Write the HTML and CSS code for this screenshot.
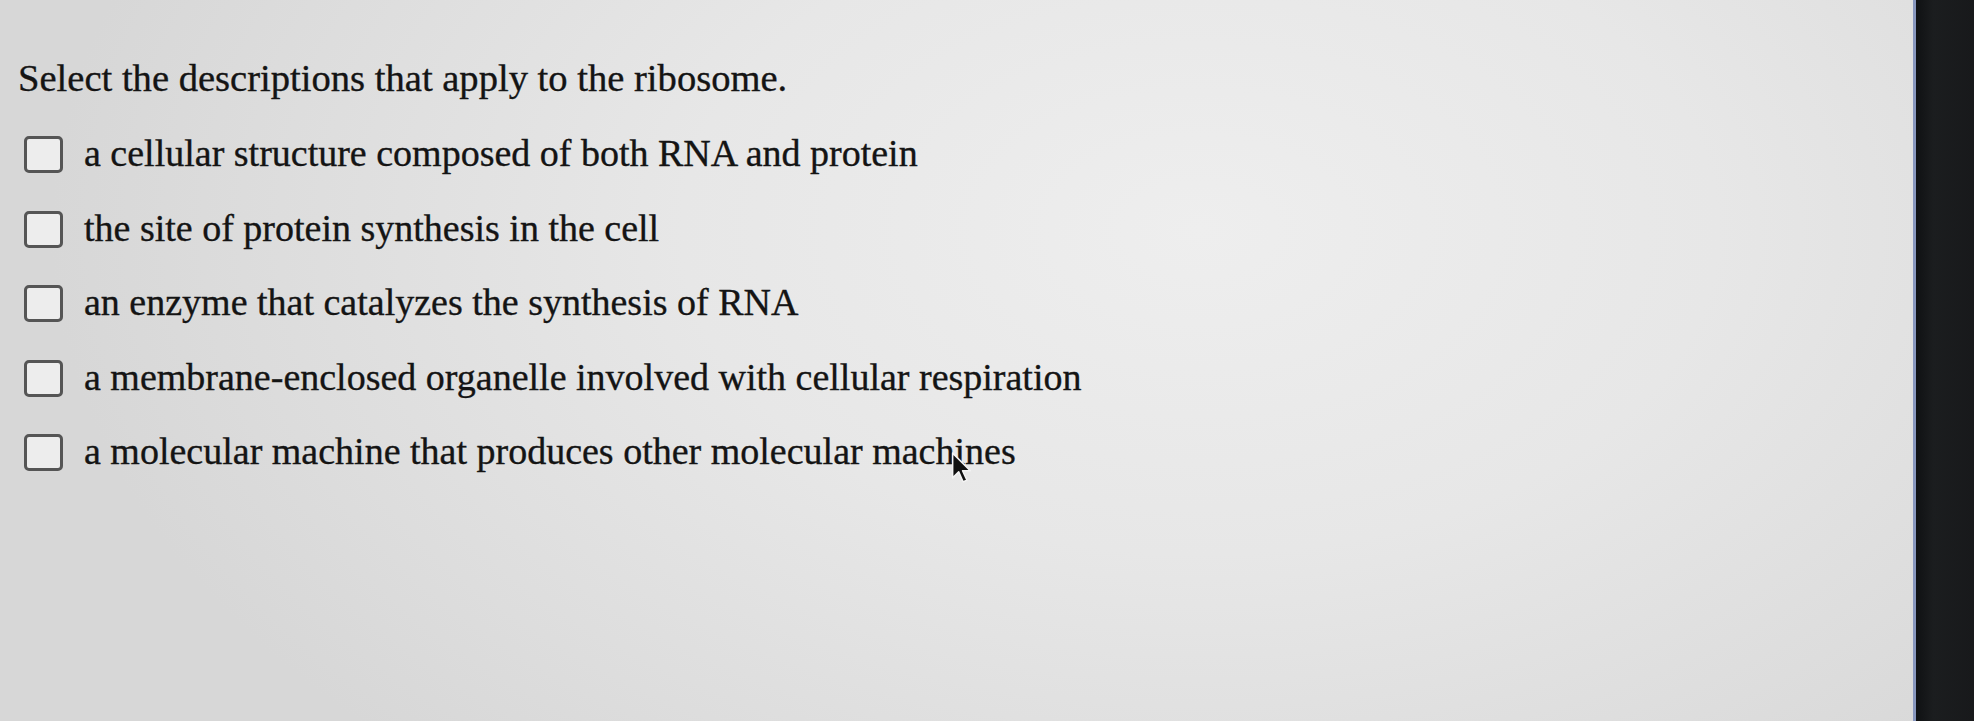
FILE: index.html
```html
<!DOCTYPE html>
<html lang="en">
<head>
<meta charset="utf-8">
<title>Ribosome question</title>
<link rel="stylesheet" href="styles.css">
</head>
<body>
<div class="screen">
  <main class="content">
    <p class="question">Select the descriptions that apply to the ribosome.</p>
    <ul class="options">
      <li class="option"><span class="box"></span><span class="label">a cellular structure composed of both RNA and protein</span></li>
      <li class="option"><span class="box"></span><span class="label">the site of protein synthesis in the cell</span></li>
      <li class="option"><span class="box"></span><span class="label">an enzyme that catalyzes the synthesis of RNA</span></li>
      <li class="option"><span class="box"></span><span class="label">a membrane-enclosed organelle involved with cellular respiration</span></li>
      <li class="option"><span class="box"></span><span class="label">a molecular machine that produces other molecular machines</span></li>
    </ul>
    <svg class="cursor" width="22" height="34" viewBox="0 0 20 30" aria-hidden="true">
      <path d="M1.5 1.5 L1.5 24 L7 18.5 L11 27.5 L14.5 26 L10.5 17.5 L17.5 17.5 Z" fill="#111" stroke="#f4f4f4" stroke-width="1.4" stroke-linejoin="round"/>
    </svg>
  </main>
  <div class="bezel"></div>
</div>
</body>
</html>
```

FILE: styles.css
```css
html, body {
  margin: 0;
  padding: 0;
  height: 100%;
  overflow: hidden;
}

body {
  font-family: "Liberation Serif", "Times New Roman", serif;
  color: #141414;
}

.screen {
  display: flex;
  width: 1974px;
  height: 721px;
}

.content {
  position: relative;
  flex: 1;
  padding: 56px 0 0 18px;
  background:
    radial-gradient(ellipse 1150px 720px at 1200px 230px, #eeeeee 0%, #e7e7e7 45%, #dddddd 80%, #d7d7d7 100%);
}

.question {
  margin: 0;
  font-size: 38.6px;
  line-height: 44px;
  -webkit-text-stroke: 0.35px #141414;
}

.options {
  list-style: none;
  margin: 31px 0 0 6px;
  padding: 0;
  display: flex;
  flex-direction: column;
  gap: 30.5px;
}

.option {
  display: flex;
  align-items: center;
  gap: 21px;
  font-size: 38px;
  line-height: 44px;
  height: 44px;
  -webkit-text-stroke: 0.35px #141414;
}

.box {
  flex: none;
  box-sizing: border-box;
  width: 39px;
  height: 37px;
  margin-top: 3px;
  border: 3px solid #555555;
  border-radius: 5px;
  background: #ededed;
}

.label {
  white-space: nowrap;
}

.cursor {
  position: absolute;
  left: 951px;
  top: 451px;
}

.bezel {
  flex: none;
  width: 58px;
  border-left: 3px solid #8796bd;
  background: linear-gradient(90deg, #0f1113 0%, #1b1d1f 30%, #18191b 100%);
}
```
